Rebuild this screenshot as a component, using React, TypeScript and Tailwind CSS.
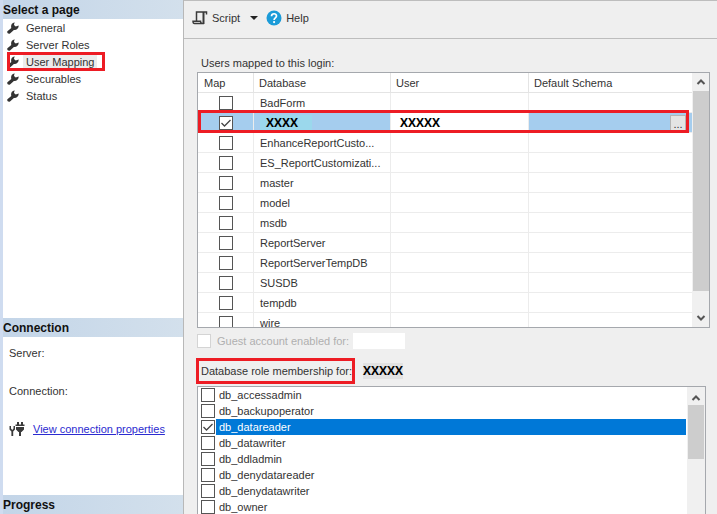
import { clsx } from "clsx";

const pages = ["General", "Server Roles", "User Mapping", "Securables", "Status"];

const databases = [
    { name: "BadForm" },
    { name: "XXXX", user: "XXXXX", mapped: true },
    { name: "EnhanceReportCusto..." },
    { name: "ES_ReportCustomizati..." },
    { name: "master" },
    { name: "model" },
    { name: "msdb" },
    { name: "ReportServer" },
    { name: "ReportServerTempDB" },
    { name: "SUSDB" },
    { name: "tempdb" },
    { name: "wire" },
];

const roles = [
    "db_accessadmin",
    "db_backupoperator",
    "db_datareader",
    "db_datawriter",
    "db_ddladmin",
    "db_denydatareader",
    "db_denydatawriter",
    "db_owner",
];

interface CheckBoxType {
    id: string;
    label?: string;
    checked?: boolean;
    disabled?: boolean;
}

function CheckBox(props: Readonly<CheckBoxType>) {
    return (
        <span className="inline-grid size-3.5 shrink-0">
            <input
                type="checkbox"
                id={props.id}
                aria-label={props.label}
                defaultChecked={props.checked}
                disabled={props.disabled}
                className="peer col-start-1 row-start-1 size-3.5 appearance-none border border-[#555] bg-white disabled:border-[#d4d4d4]"
            />
            <svg
                viewBox="0 0 14 14"
                className="pointer-events-none invisible col-start-1 row-start-1 size-3.5 peer-checked:visible"
                fill="none"
                stroke="#444"
                strokeWidth="1.3"
            >
                <path d="M2.5 7l3 3 6-6" />
            </svg>
        </span>
    );
}

function WrenchIcon() {
    return (
        <svg viewBox="0 0 12 12" className="size-3 shrink-0" fill="#333">
            <path d="M.4 9.300 4.300 6C3.600 3.300 4.700 1 7.600.2L7 3l1.700 1.500L11.700 3.600C11.800 6.600 9.500 8.300 6.900 8L3 11.400C1.500 12.300-.5 10.800.4 9.300z" />
        </svg>
    );
}

function ScriptIcon() {
    return (
        <svg viewBox="0 0 16 16" className="size-4" fill="none" stroke="#3a3a3a">
            <path d="M4.500 11V2H14.500v2.500" strokeWidth="1.500" />
            <path d="M11.500 2v12" strokeWidth="2" />
            <path d="M12 13.500H2.500Q1 13.500 1 11.200H8.500Q8.500 13 10 13.500" strokeWidth="1.500" />
        </svg>
    );
}

function HelpIcon() {
    return (
        <svg viewBox="0 0 16 16" className="size-4" fill="none">
            <circle cx="8" cy="8" r="7.5" fill="#1b9bd8" />
            <path d="M5.5 6.200C5.600 2.900 10.600 3 10.500 6c0 1.900-2.400 1.900-2.400 4" stroke="#fff" strokeWidth="1.7" />
            <circle cx="8.1" cy="12.1" r="1.1" fill="#fff" />
        </svg>
    );
}

function PlugIcon() {
    return (
        <svg viewBox="0 0 16 16" className="size-4" fill="#3a3a3a">
            <path d="M.5 5H2v2.500L3.300 9l1.200-1.500V5H6v3.500L4.200 10.500V15H2.400v-4.500L.5 8.500z" />
            <path d="M8 1h2v2.500h2V1h2v2.500h1.500V5h-9V3.500H8zM7 6h8v2.500L12.500 11H12v4h-2v-4h-.5L7 8.500z" />
        </svg>
    );
}

function Chevron(props: Readonly<{ down?: boolean }>) {
    return (
        <svg viewBox="0 0 10 10" className={clsx("size-2.5", props.down && "rotate-180")} fill="none" stroke="#555" strokeWidth="2">
            <path d="M1.500 7 5 3.500 8.500 7" />
        </svg>
    );
}

function SectionTitle(props: Readonly<{ title: string }>) {
    return (
        <h2 className="h-[19px] shrink-0 bg-gradient-to-r from-[#c3d5e8] to-[#d3e0ec] text-xs leading-5 font-bold text-[#111]">
            {props.title}
        </h2>
    );
}

function Sidebar() {
    return (
        <aside className="flex w-[184px] shrink-0 flex-col border-r border-l-3 border-r-[#b8b8b8] border-l-[#cfdcf0] bg-white">
            <SectionTitle title="Select a page" />
            <nav className="flex flex-1 flex-col items-start">
                {pages.map((page) => (
                    <button key={page} className="relative flex h-[17px] items-center gap-1 pl-1">
                        <WrenchIcon />
                        <span className={clsx("px-[3px] leading-4", page === "User Mapping" && "bg-[#ececec]")}>{page}</span>
                        {page === "User Mapping" && (
                            <span className="absolute -top-px -right-2 -bottom-px left-1 border-3 border-[#ed1c24]" />
                        )}
                    </button>
                ))}
            </nav>
            <SectionTitle title="Connection" />
            <div className="flex h-[158px] shrink-0 flex-col px-1.5 pt-2 leading-4">
                <p>Server:</p>
                <p className="mt-[22px]">Connection:</p>
                <div className="mt-[22px] flex items-center gap-2">
                    <PlugIcon />
                    <a href="#" className="text-[#2b2bd0] underline">View connection properties</a>
                </div>
            </div>
            <SectionTitle title="Progress" />
        </aside>
    );
}

function Toolbar() {
    return (
        <div className="flex h-[39px] shrink-0 items-center border-y border-[#bdbdbd] pb-1 pl-2">
            <button className="flex items-center gap-1">
                <ScriptIcon />
                Script
            </button>
            <button aria-label="Script options" className="ml-2.5 border-x-4 border-t-4 border-x-transparent border-t-[#222]" />
            <button className="ml-2 flex items-center gap-1">
                <HelpIcon />
                Help
            </button>
        </div>
    );
}

function DatabaseTable() {
    return (
        <div className="flex h-64 shrink-0 overflow-hidden border border-[#a5a8ad] bg-white">
            <div className="flex-1">
                <table className="w-full table-fixed border-separate border-spacing-0">
                    <colgroup>
                        <col className="w-[55px]" />
                        <col className="w-[137px]" />
                        <col className="w-[138px]" />
                        <col />
                    </colgroup>
                    <thead>
                        <tr className="h-5 text-left *:border-b *:border-l *:border-[#e4e4e4] *:p-0 *:pl-[5px] *:font-normal *:first:border-l-0 *:first:pl-1.5">
                            <th>Map</th>
                            <th>Database</th>
                            <th>User</th>
                            <th>Default Schema</th>
                        </tr>
                    </thead>
                    <tbody>
                        {databases.map((db) => (
                            <tr
                                key={db.name}
                                className={clsx(
                                    "relative h-5 *:border-b *:border-l *:border-[#ececec] *:p-0 *:first:border-l-0",
                                    db.mapped && "bg-[#a5cdee]"
                                )}
                            >
                                <td>
                                    <span className="flex justify-center">
                                        <CheckBox id={`map-${db.name}`} label={`Map ${db.name}`} checked={db.mapped} />
                                    </span>
                                    {db.mapped && (
                                        <span className="pointer-events-none absolute -top-[3px] right-[3px] bottom-0 left-0 border-3 border-[#ed1c24]" />
                                    )}
                                </td>
                                <td>
                                    {db.mapped ? (
                                        <span className="ml-1.5 block w-13 bg-[#9bd8ec] pl-1.5 font-['Open_Sans'] text-xs leading-4 font-bold text-black">
                                            {db.name}
                                        </span>
                                    ) : (
                                        <span className="block truncate pl-1.5">{db.name}</span>
                                    )}
                                </td>
                                <td className={clsx(db.mapped && "bg-white")}>
                                    <span className="block pl-[9px] font-['Open_Sans'] text-xs leading-4 font-bold text-black">
                                        {db.user}
                                    </span>
                                </td>
                                <td>
                                    {db.mapped && (
                                        <button
                                            aria-label="Browse schema"
                                            className="mr-1.5 ml-auto block h-4 w-4 border border-[#b5b5b5] bg-[#e4e4e4] leading-4"
                                        >
                                            ...
                                        </button>
                                    )}
                                </td>
                            </tr>
                        ))}
                    </tbody>
                </table>
            </div>
            <div className="flex w-[17px] flex-col items-center bg-[#f0f0f0]">
                <span className="flex h-[18px] items-center">
                    <Chevron />
                </span>
                <span className="w-4 flex-1 bg-[#cdcdcd]" />
                <span className="flex h-9 items-end pb-1">
                    <Chevron down />
                </span>
            </div>
        </div>
    );
}

function RoleList() {
    return (
        <div className="mr-1 flex flex-1 overflow-hidden border border-b-0 border-[#a5a8ad] bg-white">
            <ul className="flex-1">
                {roles.map((role) => (
                    <li key={role} className="flex h-4 items-center gap-px pl-[3px]">
                        <CheckBox id={role} checked={role === "db_datareader"} />
                        <label
                            htmlFor={role}
                            className={clsx("h-4 flex-1 pl-[3px] leading-4", role === "db_datareader" && "bg-[#0078d7] text-white")}
                        >
                            {role}
                        </label>
                    </li>
                ))}
            </ul>
            <div className="ml-px flex w-[18px] flex-col items-center bg-[#f0f0f0]">
                <span className="flex h-[18px] items-center pt-1">
                    <Chevron />
                </span>
                <span className="h-[54px] w-4 bg-[#cdcdcd]" />
            </div>
        </div>
    );
}

export default function App() {
    return (
        <div className="flex h-screen overflow-hidden bg-[#efefef] font-['Liberation_Sans',Arial,sans-serif] text-[11px] leading-4 text-[#333]">
            <Sidebar />
            <main className="flex min-w-0 flex-1 flex-col">
                <Toolbar />
                <div className="flex min-h-0 flex-1 flex-col pt-4 pr-[7px] pl-[13px]">
                    <p className="mb-px pl-1">Users mapped to this login:</p>
                    <DatabaseTable />
                    <div className="mt-1 flex h-[18px] shrink-0 items-center text-[#b0b0b0]">
                        <CheckBox id="guest" disabled />
                        <label htmlFor="guest" className="ml-1.5">Guest account enabled for:</label>
                        <span className="ml-1 h-4 w-13 bg-white" />
                    </div>
                    <div className="mt-2 mb-0.5 flex h-[26px] shrink-0 items-center gap-2">
                        <h3 className="-ml-px flex h-[26px] items-center border-3 border-[#ed1c24] pl-0.5">
                            Database role membership for:
                        </h3>
                        <span className="bg-[#e2e2e2] font-['Open_Sans'] text-xs leading-4 font-bold text-black">XXXXX</span>
                    </div>
                    <RoleList />
                </div>
            </main>
        </div>
    );
}
